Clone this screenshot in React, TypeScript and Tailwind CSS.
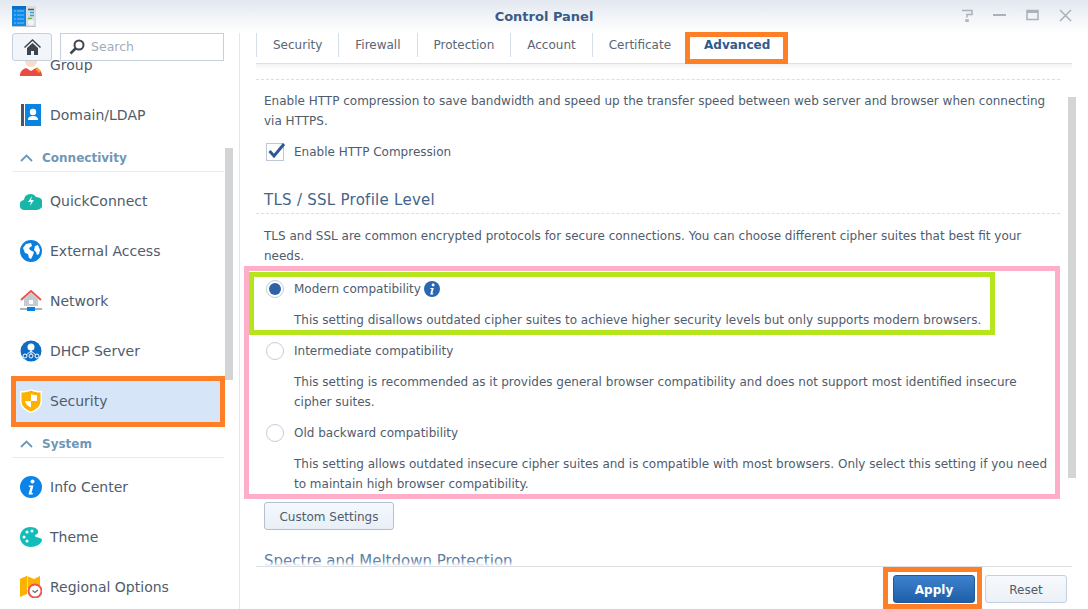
import React from "react";

const font = { fontFamily: '"DejaVu Sans", sans-serif' };

const AppIcon = () => (
  <svg width="24" height="21" viewBox="0 0 24 21">
    <rect x="0" y="0" width="14" height="20" fill="#1288e6" />
    <rect x="0" y="0" width="14" height="3" fill="#0a6fc4" />
    <path d="M2 5h2M5 5h7M2 9h2M5 9h7M2 13h2M5 13h7M2 17h2M5 17h7" stroke="#6cc3f7" strokeWidth="1" />
    <rect x="14" y="0" width="10" height="20" fill="#d9dde0" />
    <path d="M16 3.500h6" stroke="#4d5560" strokeWidth="1.500" />
    <path d="M18 6.500h4" stroke="#22a7e0" strokeWidth="1.500" />
    <path d="M18 9.500h4" stroke="#22a7e0" strokeWidth="1.500" />
    <path d="M16 12.500h4" stroke="#6fb43a" strokeWidth="1.500" />
    <circle cx="19" cy="16.500" r="3" fill="#f2f5f7" />
    <rect x="0" y="20" width="24" height="1" fill="#bcc3c9" />
  </svg>
);

const GroupIcon = () => (
  <svg width="22" height="22" viewBox="0 0 22 22">
    <path d="M0 22c0-5 3-7 6-8l5 3 5-3c3 1 6 3 6 8z" fill="#ea4a44" />
    <circle cx="11" cy="7" r="6" fill="#fbdcc8" />
    <path d="M17 13l4 4-2 2-3-3z" fill="#f5a623" />
  </svg>
);

const DomainIcon = () => (
  <svg width="20" height="22" viewBox="0 0 20 22">
    <rect x="0" y="0" width="3" height="22" fill="#4a5666" />
    <rect x="4" y="0" width="16" height="22" fill="#0a84e0" />
    <circle cx="12" cy="8" r="3.200" fill="#fff" />
    <path d="M7 16c0-3 2-4 5-4s5 1 5 4z" fill="#fff" />
  </svg>
);

const QuickIcon = () => (
  <svg width="22" height="18" viewBox="0 0 22 18">
    <path d="M5 18a5 5 0 0 1-1-10 6.500 6.500 0 0 1 12-3 6.500 6.500 0 0 1 1 13z" fill="#17b6a8" />
    <path d="M12 4l-4 6h3l-1 4 4-6h-3z" fill="#fff" />
  </svg>
);

const GlobeIcon = () => (
  <svg width="22" height="22" viewBox="0 0 22 22">
    <circle cx="11" cy="11" r="11" fill="#0a7fe0" />
    <path d="M3 8l3-4 5-1 1 3-3 2 1 2 4 2-1 3-2 4-2-1-1-4-3-1z" fill="#fff" />
    <path d="M15 6l3-1 2 5-1 4-2 1-1-3-2-2z" fill="#fff" />
  </svg>
);

const NetworkIcon = () => (
  <svg width="22" height="22" viewBox="0 0 22 22">
    <path d="M4 9l7-6 7 6v7H4z" fill="#c3cbd3" />
    <path d="M1 10l10-9 10 9" fill="none" stroke="#ef5350" strokeWidth="2" />
    <path d="M9 10h4v4H9z" fill="#fff" />
    <rect x="0" y="18" width="22" height="2" fill="#aab4bd" />
    <rect x="7" y="17" width="8" height="4" fill="#0a7fe0" />
  </svg>
);

const DhcpIcon = () => (
  <svg width="22" height="22" viewBox="0 0 22 22">
    <circle cx="11" cy="11" r="10.500" fill="#0f6cc4" />
    <circle cx="11" cy="7" r="3.500" fill="#fff" />
    <path d="M11 9v5M11 11l-5 4M11 11l5 4" stroke="#fff" strokeWidth="1" />
    <circle cx="5" cy="16" r="2" fill="none" stroke="#fff" strokeWidth="1" />
    <circle cx="11" cy="16" r="2" fill="none" stroke="#fff" strokeWidth="1" />
    <circle cx="17" cy="16" r="2" fill="none" stroke="#fff" strokeWidth="1" />
  </svg>
);

const ShieldIcon = () => (
  <svg width="24" height="24" viewBox="0 0 24 24">
    <path d="M12 0c4 2 7 2 11 2v10c0 6-5 10-11 12C6 22 1 18 1 12V2c4 0 7 0 11-2z" fill="#fff" />
    <path d="M12 1.500c3 1.500 6 2 9.500 2V12c0 5-4 8.500-9.500 10.500C6.500 20.500 2.500 17 2.500 12V3.500c3.500 0 6.500-.5 9.500-2z" fill="#fdb100" />
    <path d="M12 5c2 .8 4 1.200 6 1.200V12h-6zM12 12v6.500c-3-1.300-5.500-3.500-6-6.500z" fill="#fff" />
  </svg>
);

const InfoIcon = ({ size, color }: { size: number; color: string }) => (
  <svg width={size} height={size} viewBox="0 0 22 22">
    <circle cx="11" cy="11" r="11" fill={color} />
    <circle cx="12.500" cy="5.500" r="2" fill="#fff" />
    <path d="M9 9.500h4.500l-2 7.500h1.500l-.5 1.500H8.500l2-7.500H8.700z" fill="#fff" />
  </svg>
);

const ThemeIcon = () => (
  <svg width="22" height="20" viewBox="0 0 22 20">
    <path d="M10 0c6 0 9 3 8 6-1 2-3 1-3 3s7 1 7 4-5 7-11 7S0 16 0 10 5 0 10 0z" fill="#12bdb9" />
    <circle cx="7" cy="5" r="1.500" fill="#fff" />
    <circle cx="12" cy="4" r="1.500" fill="#fff" />
    <circle cx="4" cy="10" r="1.500" fill="#fff" />
    <circle cx="7" cy="14" r="1.500" fill="#fff" />
  </svg>
);

const RegionalIcon = () => (
  <svg width="22" height="22" viewBox="0 0 22 22">
    <path d="M0 3l7-3 7 3 6-3v12H0z" fill="#fdb100" />
    <path d="M0 3l7-3v18l-7 3z" fill="#fdb100" />
    <path d="M7 0h1v18H7z" fill="#fff" opacity="0.5" />
    <circle cx="15" cy="15" r="6.500" fill="#fff" stroke="#ef5350" strokeWidth="2" />
    <path d="M12.500 14.500l2.500 2 3-2.500" fill="none" stroke="#666" strokeWidth="1.200" />
  </svg>
);

const HomeIcon = () => (
  <svg width="17" height="16" viewBox="0 0 17 16">
    <path d="M8.500 0L0 8l1 1 7.500-7 7.500 7 1-1z" fill="#3d4650" />
    <path d="M3 9l5.500-5 5.500 5v7h-4v-4H7v4H3z" fill="#3d4650" />
  </svg>
);

const SearchIcon = () => (
  <svg width="16" height="16" viewBox="0 0 16 16">
    <circle cx="10" cy="6" r="4.500" fill="none" stroke="#3d4650" strokeWidth="2" />
    <path d="M6.500 9.500L1.500 14.500" stroke="#3d4650" strokeWidth="2.500" />
  </svg>
);

const Chevron = () => (
  <svg width="13" height="8" viewBox="0 0 13 8" fill="none">
    <path d="M1 7l5.500-5.500L12 7" stroke="#6f97b8" strokeWidth="1.800" />
  </svg>
);

const NavItem = ({ icon, label, active }: { icon: React.ReactNode; label: string; active?: boolean }) => (
  <div className={`flex h-[50px] items-center text-[14px] text-[#4f5c6d] ${active ? "mx-[4px] bg-[#d6e6f8]" : ""}`}>
    <div className={`flex w-[26px] flex-none justify-center ${active ? "ml-[2px]" : "ml-[6px]"}`}>{icon}</div>
    <span className="ml-[6px]">{label}</span>
  </div>
);

const SectionHeader = ({ label }: { label: string }) => (
  <div className="mb-[4px] flex h-[32px] items-center gap-[9px] border-b border-[#e8ebf1] pl-[8px] pt-[5px] text-[12px] font-bold text-[#6f97b8]">
    <Chevron />
    <span>{label}</span>
  </div>
);

const Sidebar = () => (
  <div className="flex w-[240px] flex-none flex-col border-r border-[#e3e6ea] pl-[12px] pr-[15px]">
    <div className="z-10 flex h-[27px] flex-none items-start gap-[8px] bg-white">
      <div className="flex h-[28px] w-[40px] flex-none items-center justify-center rounded-[3px] border border-[#c4d0de] bg-[#f2f6fb]">
        <HomeIcon />
      </div>
      <div className="flex h-[28px] flex-1 items-center gap-[6px] border border-[#c4d0de] bg-white pl-[8px] text-[12.500px] text-[#a3adb9]">
        <SearchIcon />
        <span>Search</span>
      </div>
    </div>
    <div className="-mt-[20px] flex-1 overflow-hidden">
      <NavItem icon={<GroupIcon />} label="Group" />
      <NavItem icon={<DomainIcon />} label="Domain/LDAP" />
      <SectionHeader label="Connectivity" />
      <NavItem icon={<QuickIcon />} label="QuickConnect" />
      <NavItem icon={<GlobeIcon />} label="External Access" />
      <NavItem icon={<NetworkIcon />} label="Network" />
      <NavItem icon={<DhcpIcon />} label="DHCP Server" />
      <NavItem icon={<ShieldIcon />} label="Security" active />
      <SectionHeader label="System" />
      <NavItem icon={<InfoIcon size={22} color="#0a84e8" />} label="Info Center" />
      <NavItem icon={<ThemeIcon />} label="Theme" />
      <NavItem icon={<RegionalIcon />} label="Regional Options" />
    </div>
  </div>
);

const tabs = ["Security", "Firewall", "Protection", "Account", "Certificate"];

const Tabs = () => (
  <div className="mx-[16px] flex h-[31px] flex-none items-start border-b border-[#dcdfe3] pr-[12px]">
    {tabs.map((t) => (
      <div key={t} className="flex h-[24px] items-center border-l border-[#d5dfe9] px-[16px] text-[12px] text-[#5a6675]">
        {t}
      </div>
    ))}
    <div className="flex h-[24px] items-center border-l border-[#d5dfe9] px-[16px] text-[12px] font-bold text-[#2f5a90]">
      Advanced
    </div>
  </div>
);

const Radio = ({ checked }: { checked?: boolean }) => (
  <div className="flex h-[18px] w-[18px] flex-none items-center justify-center rounded-full border border-[#c3cedb] bg-white">
    {checked && <div className="h-[12px] w-[12px] rounded-full bg-[#2f62a5]" />}
  </div>
);

const RadioOption = ({
  label,
  checked,
  info,
  children,
}: {
  label: string;
  checked?: boolean;
  info?: boolean;
  children: React.ReactNode;
}) => (
  <div>
    <div className="flex h-[20px] items-center">
      <div className="ml-[2px] w-[28px] flex-none">
        <Radio checked={checked} />
      </div>
      <span>{label}</span>
      {info && (
        <span className="ml-[3px]">
          <InfoIcon size={16} color="#2a67b1" />
        </span>
      )}
    </div>
    <p className="mt-[11px] pl-[30px]">{children}</p>
  </div>
);

const Content = () => (
  <div className="relative flex-1 overflow-hidden">
    <div className="pl-[24px] pr-[28px] pt-[15px] text-[12px] leading-[20px] text-[#4f5c6d]">
      <div className="-ml-[8px] border-t border-dashed border-[#d5e0ea]" />
      <p className="mt-[11px]">
        Enable HTTP compression to save bandwidth and speed up the transfer speed between web server and browser when
        connecting via HTTPS.
      </p>
      <div className="mt-[11px] flex h-[20px] items-center gap-[10px] pl-[2px]">
        <div className="relative h-[18px] w-[18px] flex-none border border-[#bcc8d6] bg-white">
          <svg className="absolute -top-[3px] left-0" width="20" height="20" viewBox="0 0 20 20" fill="none">
            <path d="M2.500 10l4.500 5L17 3" stroke="#2f5a90" strokeWidth="3" />
          </svg>
        </div>
        <span>Enable HTTP Compression</span>
      </div>
      <h2 className="mt-[28px] text-[15px] font-normal leading-[20px] tracking-[0.27px] text-[#43648c]">
        TLS / SSL Profile Level
      </h2>
      <div className="-ml-[8px] mt-[3px] border-t border-dashed border-[#d5e0ea]" />
      <p className="mt-[12px]">
        TLS and SSL are common encrypted protocols for secure connections. You can choose different cipher suites that
        best fit your needs.
      </p>
      <div className="mt-[13px] flex flex-col gap-[11px]">
        <RadioOption label="Modern compatibility" checked info>
          This setting disallows outdated cipher suites to achieve higher security levels but only supports modern
          browsers.
        </RadioOption>
        <RadioOption label="Intermediate compatibility">
          This setting is recommended as it provides general browser compatibility and does not support most identified
          insecure
          <br />
          cipher suites.
        </RadioOption>
        <RadioOption label="Old backward compatibility">
          This setting allows outdated insecure cipher suites and is compatible with most browsers. Only select this
          setting if you need
          <br />
          to maintain high browser compatibility.
        </RadioOption>
      </div>
      <button className="mt-[8px] flex h-[28px] w-[130px] items-center justify-center rounded-[3px] border border-[#b4c0cf] bg-gradient-to-b from-[#f5f9fe] to-[#e9eff7] pt-[2px] text-[12px] text-[#4f5c6d]">
        Custom Settings
      </button>
      <h2 className="mt-[21px] text-[15px] font-normal leading-[20px] text-[#5f7fa6]">Spectre and Meltdown Protection</h2>
    </div>
    {/* fades under the tab bar and above the footer */}
    <div className="absolute left-[16px] right-[16px] top-0 h-[6px] bg-gradient-to-b from-[#f2f3f4] to-white" />
    <div className="absolute bottom-0 left-[16px] right-[16px] h-[5px] bg-gradient-to-b from-white/0 to-white" />
    {/* scrollbar */}
    <div className="absolute left-[828px] top-[33px] h-[381px] w-[8px] bg-[#d3d4d6]" />
  </div>
);

const Footer = () => (
  <div className="mx-[16px] flex h-[43px] flex-none items-start justify-end gap-[10px] border-t border-[#dcdfe3] pr-[5px] pt-[8px]">
    <button className="flex h-[28px] w-[82px] items-center justify-center rounded-[3px] border border-[#1f5a9e] bg-gradient-to-b from-[#3d82cf] to-[#1f5ea8] pt-[2px] text-[12px] font-bold text-white">
      Apply
    </button>
    <button className="flex h-[28px] w-[82px] items-center justify-center rounded-[3px] border border-[#c4d0de] bg-gradient-to-b from-[#f6f9fd] to-[#ecf1f7] pt-[2px] text-[12px] text-[#4f5c6d]">
      Reset
    </button>
  </div>
);

const TitleBar = () => (
  <div className="relative flex h-[33px] flex-none items-center justify-center bg-gradient-to-b from-[#e3e8f0] to-white">
    <div className="absolute left-[12px] top-[6px]">
      <AppIcon />
    </div>
    <span className="text-[13px] font-bold text-[#3a5c85]">Control Panel</span>
    <div className="absolute right-[16px] top-[9px] flex items-center gap-[20px]">
      <svg width="12" height="13" viewBox="0 0 12 13" fill="none">
        <path d="M1 1.500h10v4H6v3M5 11h2v2H5z" stroke="#aab1b9" strokeWidth="1.500" />
      </svg>
      <svg width="13" height="13" viewBox="0 0 13 13">
        <rect x="0" y="5" width="13" height="2" fill="#aab1b9" />
      </svg>
      <svg width="13" height="13" viewBox="0 0 13 13" fill="none">
        <rect x="1" y="1.500" width="11" height="9" stroke="#aab1b9" strokeWidth="1.500" />
        <rect x="1" y="1" width="11" height="3" fill="#aab1b9" />
      </svg>
      <svg width="13" height="13" viewBox="0 0 13 13">
        <path d="M1 1l11 11M12 1L1 12" stroke="#aab1b9" strokeWidth="1.500" />
      </svg>
    </div>
  </div>
);

const Box = ({ className }: { className: string }) => (
  <div className={`pointer-events-none absolute border-[5px] ${className}`} />
);

const App: React.FC = () => {
  return (
    <div className="relative flex h-[609px] w-[1088px] flex-col overflow-hidden bg-white" style={font}>
      <TitleBar />
      <div className="flex min-h-0 flex-1">
        <Sidebar />
        <div className="flex min-w-0 flex-1 flex-col">
          <Tabs />
          <Content />
          <Footer />
        </div>
      </div>
      {/* sidebar scrollbar */}
      <div className="absolute left-[225px] top-[148px] h-[232px] w-[8px] bg-[#d3d4d6]" />
      {/* annotations drawn on the screenshot */}
      <Box className="left-[11px] top-[376px] h-[51px] w-[214px] border-[#ff7f27]" />
      <Box className="left-[685px] top-[32px] h-[32px] w-[103px] border-[#ff7f27]" />
      <Box className="left-[883px] top-[567px] h-[42px] w-[99px] border-[#ff7f27]" />
      <Box className="left-[244px] top-[266px] h-[233px] w-[816px] border-[#ffaec9]" />
      <Box className="left-[249px] top-[272px] h-[63px] w-[746px] border-[#b5e61d]" />
    </div>
  );
};

export default App;
